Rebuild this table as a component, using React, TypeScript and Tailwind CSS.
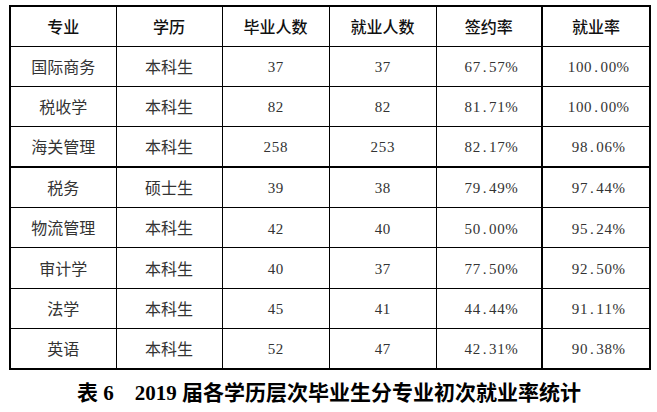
import React from "react";

type Row = [string, string, string, string, string, string];

const rows: Row[] = [
  ["国际商务", "本科生", "37", "37", "67.57%", "100.00%"],
  ["税收学", "本科生", "82", "82", "81.71%", "100.00%"],
  ["海关管理", "本科生", "258", "253", "82.17%", "98.06%"],
  ["税务", "硕士生", "39", "38", "79.49%", "97.44%"],
  ["物流管理", "本科生", "42", "40", "50.00%", "95.24%"],
  ["审计学", "本科生", "40", "37", "77.50%", "92.50%"],
  ["法学", "本科生", "45", "41", "44.44%", "91.11%"],
  ["英语", "本科生", "52", "47", "42.31%", "90.38%"],
];

const headers = ["专业", "学历", "毕业人数", "就业人数", "签约率", "就业率"];

function Mono({ text }: { text: string }) {
  return (
    <span className="inline-flex font-['Liberation_Serif',serif] text-[15px] text-[#333]">
      {text.split("").map((c, i) => (
        <span key={i} className="inline-block w-[8.2px] text-center">
          {c}
        </span>
      ))}
    </span>
  );
}

export default function App() {
  return (
    <div className="w-[657px] h-[412px] bg-white pt-[5px] pl-[9px]">
      <table className="table-fixed border-collapse border-2 border-black w-[640px]">
        <colgroup>
          <col className="w-[106px]" />
          <col className="w-[106px]" />
          <col className="w-[107px]" />
          <col className="w-[107px]" />
          <col className="w-[106px]" />
          <col className="w-[108px]" />
        </colgroup>
        <thead>
          <tr className="h-[40px]">
            {headers.map((h, i) => (
              <th
                key={h}
                className={`border border-black p-0 text-center align-middle font-['Noto_Sans_CJK_SC',sans-serif] text-[16px] font-medium text-[#111] ${
                  i === 5 ? "border-l-2" : ""
                }`}
              >
                {h}
              </th>
            ))}
          </tr>
        </thead>
        <tbody>
          {rows.map((r, ri) => (
            <tr key={ri} className={`h-[40.4px] ${ri === 2 ? "border-b-2 border-black" : ""}`}>
              {r.map((c, ci) => (
                <td
                  key={ci}
                  className={`border border-black p-0 text-center align-middle ${
                    ci === 5 ? "border-l-2" : ""
                  } ${ri === 2 ? "border-b-2" : ""}`}
                >
                  {ci < 2 ? (
                    <span className="font-['Noto_Sans_CJK_SC',sans-serif] text-[16px] text-[#333]">
                      {c}
                    </span>
                  ) : (
                    <Mono text={c} />
                  )}
                </td>
              ))}
            </tr>
          ))}
        </tbody>
      </table>
      <div className="w-[640px] mt-[13px] text-center font-['Liberation_Serif','Noto_Sans_CJK_SC',serif] text-[21px] leading-[21px] font-bold text-black">
        表 6{"\u3000"}2019 届各学历层次毕业生分专业初次就业率统计
      </div>
    </div>
  );
}
